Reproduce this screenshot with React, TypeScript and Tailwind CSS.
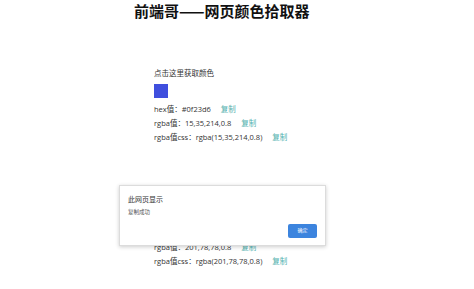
import React from "react";

type Pick = {
  hex: string;
  rgba: string;
  swatch: string;
};

const picks: Pick[] = [
  { hex: "#0f23d6", rgba: "15,35,214,0.8", swatch: "rgba(15,35,214,0.8)" },
  { hex: "#c94e4e", rgba: "201,78,78,0.8", swatch: "rgba(201,78,78,0.8)" },
];

const font = { fontFamily: '"Open Sans", "Noto Sans CJK SC", sans-serif' };

const Row: React.FC<{ label: string; hidden?: boolean }> = ({ label, hidden }) => (
  <div className={"flex items-center h-[14px] leading-[14px] text-[7.5px] text-[#333] " + (hidden ? "invisible" : "")}>
    <span>{label}</span>
    <span className="ml-[10px] text-[#4fb0ae]">复制</span>
  </div>
);

// covered = top part sits under the alert, so it isn't painted
const PickerBlock: React.FC<{ pick: Pick; className?: string; covered?: boolean }> = ({ pick, className, covered }) => (
  <div className={"flex flex-col pl-[154px] " + (className || "")}>
    <div className={"h-[14px] leading-[14px] text-[7.5px] text-[#333] " + (covered ? "invisible" : "")}>点击这里获取颜色</div>
    {/* swatch */}
    <div className={"mt-[4px] w-[14px] h-[14px] " + (covered ? "invisible" : "")} style={{ backgroundColor: pick.swatch }} />
    <div className="mt-[4px] flex flex-col">
      <Row label={`hex值：${pick.hex}`} hidden={covered} />
      <Row label={`rgba值：${pick.rgba}`} />
      <Row label={`rgba值css：rgba(${pick.rgba})`} />
    </div>
  </div>
);

export default function App() {
  return (
    <div className="relative w-[474px] h-[289px] bg-white overflow-hidden" style={font}>
      <h1
        className="pt-[3px] pl-[134px] h-[19px] leading-[16px] text-[15px] font-bold text-[#111]"
        style={{ fontFamily: '"Noto Sans CJK SC", sans-serif' }}
      >
        前端哥——网页颜色拾取器
      </h1>

      <PickerBlock pick={picks[0]} className="mt-[47px]" />
      <PickerBlock pick={picks[1]} className="mt-[46px]" covered />

      {/* alert dialog */}
      <div className="absolute left-[119px] top-[185px] w-[207px] h-[61px] bg-white border border-[#dcdcdc] shadow-[0_1px_4px_rgba(0,0,0,0.2)] flex flex-col px-[8px] pt-[9px] pb-[7px]">
        <div className="h-[9px] leading-[9px] text-[7px] text-[#333]">此网页显示</div>
        <div className="mt-[4px] h-[8px] leading-[8px] text-[5.5px] text-[#555]">复制成功</div>
        <div className="mt-auto flex justify-end">
          <div className="w-[29px] h-[14px] rounded-[2px] bg-[#3c84de] text-white text-[5px] flex items-center justify-center">
            确定
          </div>
        </div>
      </div>
    </div>
  );
}
